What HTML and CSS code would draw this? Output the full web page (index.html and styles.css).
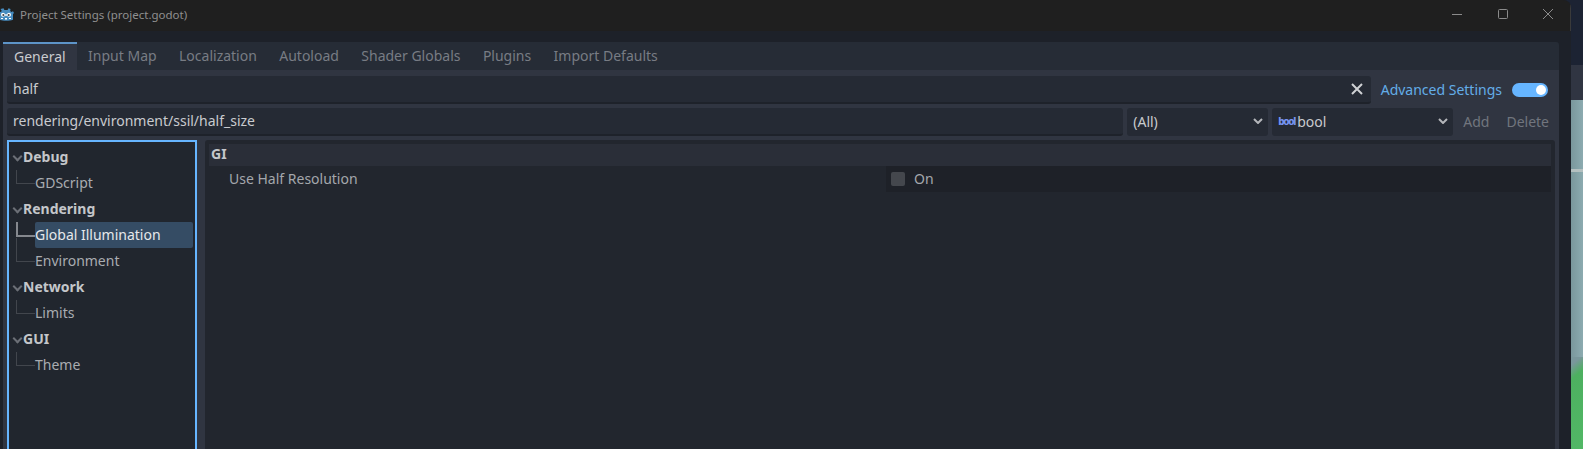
FILE: index.html
```html
<!DOCTYPE html>
<html lang="en">

<head>
  <meta charset="UTF-8">
  <title>Project Settings (project.godot)</title>
  <link rel="stylesheet" href="styles.css">
</head>

<body>
  <div class="window">
    <!-- Title bar -->
    <div class="titlebar">
      <svg class="app-icon" width="16" height="16" viewBox="0 0 16 16">
        <path fill="#478cbf" d="M5.5 1.2 6.4 3h3.2l.9-1.8 2 .8-.3 1.9 1.2 1L15 4.2l1 1.9-1 1v5.7c-2 .6-4 1-7 1s-5-.4-7-1V7.100l-1-1 1-1.900 1.600.7 1.200-1L2.500 2z" />
        <circle cx="5" cy="7.800" r="2" fill="#fff" />
        <circle cx="11" cy="7.800" r="2" fill="#fff" />
        <circle cx="5.300" cy="8" r="1" fill="#414042" />
        <circle cx="10.700" cy="8" r="1" fill="#414042" />
        <rect x="7.300" y="7" width="1.400" height="2" fill="#fff" />
        <path fill="#fff" d="M3 11h2v1H3zM7 11h2v1.400H7zM11 11h2v1h-2z" />
      </svg>
      <span class="title-text">Project Settings (project.godot)</span>
      <div class="window-btns">
        <svg width="10" height="10" viewBox="0 0 10 10">
          <path d="M0 5.500h10" stroke="#8b8b8b" fill="none" />
        </svg>
        <svg width="10" height="10" viewBox="0 0 10 10">
          <rect x=".5" y=".5" width="9" height="9" rx="1" stroke="#8b8b8b" fill="none" />
        </svg>
        <svg width="10" height="10" viewBox="0 0 10 10">
          <path d="M0 0l10 10M10 0 0 10" stroke="#8b8b8b" fill="none" />
        </svg>
      </div>
    </div>

    <div class="content">
      <div class="tabs">
        <div class="tab active">General</div>
        <div class="tab">Input Map</div>
        <div class="tab">Localization</div>
        <div class="tab">Autoload</div>
        <div class="tab">Shader Globals</div>
        <div class="tab">Plugins</div>
        <div class="tab">Import Defaults</div>
      </div>

      <div class="panel">
        <!-- Search row -->
        <div class="tool-row search-row">
          <div class="field grow">
            <span class="grow">half</span>
            <svg width="12" height="12" viewBox="0 0 12 12">
              <path d="M1 1l10 10M11 1 1 11" stroke="#cfd1d4" stroke-width="2" fill="none" />
            </svg>
          </div>
          <span class="advanced-label">Advanced Settings</span>
          <div class="toggle"><span class="toggle-knob"></span></div>
        </div>

        <!-- Add setting row -->
        <div class="tool-row">
          <div class="field grow">rendering/environment/ssil/half_size</div>
          <div class="select select-all">
            <span class="grow">(All)</span>
            <svg class="chevron" width="10" height="6" viewBox="0 0 10 6">
              <path d="M1 1l4 4 4-4" stroke="#b4b6ba" stroke-width="2" fill="none" />
            </svg>
          </div>
          <div class="select select-type">
            <span class="bool-icon">bool</span>
            <span class="grow">bool</span>
            <svg class="chevron" width="10" height="6" viewBox="0 0 10 6">
              <path d="M1 1l4 4 4-4" stroke="#b4b6ba" stroke-width="2" fill="none" />
            </svg>
          </div>
          <span class="flat-btn btn-add">Add</span>
          <span class="flat-btn btn-delete">Delete</span>
        </div>

        <div class="split">
          <!-- Sections tree -->
          <div class="tree">
            <div class="tree-row group">Debug</div>
            <div class="tree-row child">GDScript</div>
            <div class="tree-row group">Rendering</div>
            <div class="tree-row child selected"><span class="tree-item">Global Illumination</span></div>
            <div class="tree-row child next-sibling">Environment</div>
            <div class="tree-row group">Network</div>
            <div class="tree-row child">Limits</div>
            <div class="tree-row group">GUI</div>
            <div class="tree-row child">Theme</div>
          </div>

          <!-- Inspector -->
          <div class="inspector">
            <div class="section-head">GI</div>
            <div class="prop-row">
              <div class="prop-name">Use Half Resolution</div>
              <div class="prop-value">
                <span class="checkbox"></span>
                <span class="prop-label">On</span>
              </div>
            </div>
          </div>
        </div>
      </div>
    </div>
  </div>

  <!-- Editor showing behind the window -->
  <div class="behind">
    <div class="behind-top"></div>
    <div class="behind-band"></div>
    <div class="behind-sky"></div>
    <div class="behind-line"></div>
    <div class="behind-sky behind-sky-low"></div>
    <div class="behind-grass"></div>
  </div>
</body>

</html>
```

FILE: styles.css
```css
body {
  font-family: "Noto Sans", sans-serif;
  font-size: 14px;
  margin: 0;
  width: 1583px;
  height: 449px;
  overflow: hidden;
  display: flex;
  background: #1c2333;
  color: #c9cbcf;
}

.grow {
  flex: 1;
  min-width: 0;
}

.window {
  width: 1571px;
  flex: none;
  display: flex;
  flex-direction: column;
  background: #1d2129;
  border-top-right-radius: 8px;
  overflow: hidden;
}

.titlebar {
  height: 31px;
  flex: none;
  display: flex;
  align-items: center;
  background: #1f1f1f;
  border-right: 1px solid #3a3a3a;
}

.app-icon {
  margin-left: -2px;
  margin-top: -2px;
}

.title-text {
  font-size: 11.5px;
  color: #8f8f8f;
  margin-left: 6px;
  margin-top: -2px;
}

.window-btns {
  margin-left: auto;
  margin-right: 17px;
  margin-top: -3px;
  display: flex;
  gap: 35.5px;
}

.content {
  flex: 1;
  display: flex;
  flex-direction: column;
  padding: 11px 12px 0 3px;
}

.tabs {
  height: 28px;
  flex: none;
  display: flex;
  background: #262c36;
  border-radius: 3px 3px 0 0;
}

.tab {
  padding: 0 11px;
  margin-right: 0.4px;
  line-height: 27px;
  color: #787c84;
}

.tab.active {
  margin-right: 0.5px;
  color: #c9cbcf;
  background: #303541;
  border-top: 2px solid #5d94c8;
  line-height: 25px;
}

.panel {
  flex: 1;
  min-height: 0;
  display: flex;
  flex-direction: column;
  gap: 4px;
  padding: 6px 4px 0;
  background: #303541;
}

.tool-row {
  height: 28px;
  flex: none;
  display: flex;
  align-items: stretch;
  gap: 4px;
}

.field {
  display: flex;
  align-items: center;
  padding: 0 6px 1px;
  background: #252a34;
  border-radius: 3px;
  border-bottom: 2px solid #1e222a;
  box-sizing: border-box;
}

.field svg {
  margin-right: 2px;
}

.search-row {
  gap: 0;
  padding-right: 7px;
  align-items: stretch;
}

.advanced-label {
  margin-left: 10px;
  line-height: 28px;
  color: #63ade8;
}

.toggle {
  width: 36px;
  height: 14px;
  align-self: center;
  margin-left: 10px;
  display: flex;
  justify-content: flex-end;
  align-items: center;
  padding-right: 2px;
  box-sizing: border-box;
  border-radius: 7px;
  background: #66b5ff;
}

.toggle-knob {
  width: 10px;
  height: 10px;
  border-radius: 50%;
  background: #fff;
}

.select {
  display: flex;
  align-items: center;
  padding: 0 5px 2px 6px;
  background: #252a34;
  border-radius: 3px;
  box-sizing: border-box;
}

.select-all {
  width: 141px;
}

.select-type {
  width: 181px;
}

.bool-icon {
  flex: none;
  width: 19px;
  font-size: 10px;
  font-weight: 800;
  letter-spacing: -1.3px;
  color: #7794f2;
}

.flat-btn {
  line-height: 27px;
  color: #71757e;
}

.btn-add {
  margin-left: 6px;
}

.btn-delete {
  margin-left: 13px;
  margin-right: 6px;
}

.split {
  flex: 1;
  min-height: 0;
  display: flex;
  gap: 8px;
}

.tree {
  width: 190px;
  flex: none;
  box-sizing: border-box;
  padding: 2px;
  border: 2px solid #66b5ff;
  border-bottom: 0;
  background: #21262e;
}

.tree-row {
  position: relative;
  height: 26px;
  line-height: 26px;
}

.tree-row.group {
  padding-left: 12px;
  font-weight: 700;
  color: #c4c6ca;
}

.tree-row.group::before {
  content: "";
  position: absolute;
  left: 3px;
  top: 9px;
  width: 5px;
  height: 5px;
  border-right: 2px solid #6b6f76;
  border-bottom: 2px solid #6b6f76;
  transform: rotate(45deg);
}

.tree-row.child {
  padding-left: 24px;
  color: #a9acb1;
}

/* connector: one line down to the middle of the row, one across to the text */
.tree-row.child::before {
  content: "";
  position: absolute;
  left: 5px;
  top: 0;
  width: 18px;
  height: 13px;
  border-left: 1px solid #42464d;
  border-bottom: 1px solid #42464d;
}

.tree-row.next-sibling::before {
  top: -10px;
  height: 23px;
}

.tree-row.selected {
  padding-left: 24px;
  color: #e6e8eb;
}

.tree-row.selected::before {
  width: 17px;
  border-left: 2px solid #85888e;
  border-bottom: 2px solid #85888e;
}

.tree-item {
  display: block;
  background: #354c64;
  border-radius: 2px;
}

.inspector {
  flex: 1;
  min-width: 0;
  padding: 4px 4px 0;
  background: #22262e;
  border-radius: 3px 3px 0 0;
}

.section-head {
  height: 22px;
  line-height: 20px;
  padding-left: 2px;
  font-weight: 700;
  color: #c4c6ca;
  background: #2a2e38;
}

.prop-row {
  height: 26px;
  display: flex;
  align-items: center;
  color: #a4a7ac;
}

.prop-name {
  width: 677px;
  padding-left: 20px;
  box-sizing: border-box;
  margin-top: -2px;
}

.prop-value {
  flex: 1;
  height: 100%;
  display: flex;
  align-items: center;
  gap: 9px;
  padding-left: 5px;
  background: #1e2128;
}

.prop-label {
  margin-top: -2px;
}

.checkbox {
  width: 14px;
  height: 14px;
  border-radius: 2px;
  background: #44474d;
}

.behind {
  flex: 1;
  display: flex;
  flex-direction: column;
}

.behind-top {
  height: 65px;
  background: #1c2333;
}

.behind-band {
  height: 35px;
  background: #303542;
}

.behind-sky {
  height: 69px;
  background: linear-gradient(90deg, #7a979c, #8cabb0);
}

.behind-line {
  height: 3px;
  background: #b4c0c0;
}

.behind-sky-low {
  height: auto;
  flex: 1;
}

/* the grass edge runs on a slant */
.behind-grass {
  height: 92px;
  background: linear-gradient(140deg, #7a979c 0, #7a979c 8%, #4db060 22%, #52b866 100%);
}
```
